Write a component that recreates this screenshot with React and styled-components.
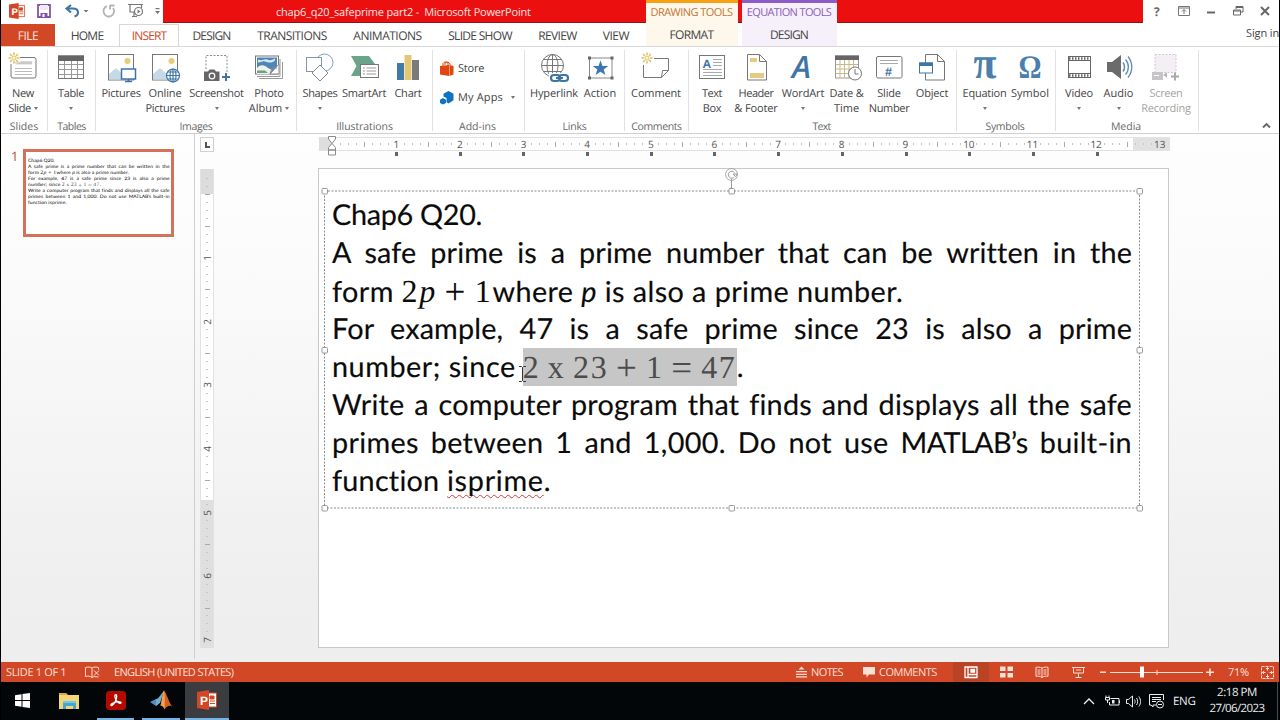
import React, { useLayoutEffect, useRef } from 'react';
import styled, { createGlobalStyle, css } from 'styled-components';

const ui = '"Open Sans", "Noto Sans", "Liberation Sans", sans-serif';
const accent = '#d24726';
const blue = '#3f75a5';
const grey = '#777';

const GlobalStyle = createGlobalStyle`
  * { box-sizing: border-box; }
  body {
    margin: 0;
    overflow: hidden;
    background: #000;
    font-family: ${ui};
    font-size: 11px;
    color: #444;
    text-rendering: geometricPrecision;
  }
  svg { display: block; flex: none; overflow: visible; }
`;

/* ---------- text with a fixed advance width ---------- */

const FitSpan = styled.span`
  display: inline-block;
  white-space: pre;
`;

function Fit({ w, children, className }) {
  const ref = useRef(null);
  useLayoutEffect(() => {
    const el = ref.current;
    el.style.letterSpacing = '0px';
    const count = el.textContent.length;
    const gap = (w - el.offsetWidth) / count;
    el.style.letterSpacing = `${gap.toFixed(3)}px`;
  }, [w, children]);
  return <FitSpan ref={ref} className={className}>{children}</FitSpan>;
}

/* ---------- window ---------- */

const Screen = styled.div`
  width: 1280px;
  height: 720px;
  padding: 0 1px;
  display: flex;
  flex-direction: column;
  overflow: hidden;
`;

const Header = styled.header`
  display: flex;
  height: 46px;
  background: #fff;
`;

const HeaderLeft = styled.div`
  width: 645px;
  display: flex;
  flex-direction: column;
`;

const HeaderRight = styled.div`
  flex: 1;
  display: flex;
  flex-direction: column;
`;

const TitleRow = styled.div`
  display: flex;
  height: 23px;
`;

const QuickAccess = styled.div`
  width: 162px;
  display: flex;
  align-items: center;
  padding: 0 0 2px 8px;
`;

const QuickIcon = styled.div`
  width: ${p => p.$w}px;
  display: flex;
`;

const RedBar = styled.div`
  flex: ${p => (p.$w ? 'none' : 1)};
  width: ${p => (p.$w ? `${p.$w}px` : 'auto')};
  height: 23px;
  background: #eb0f0f;
  border-bottom: 1px solid #8f1414;
  color: #fbe3e0;
  padding: 5px 0 0 ${p => (p.$title ? 113 : 0)}px;
  line-height: 16px;
`;

const WindowButtons = styled.div`
  width: 136px;
  display: flex;
  align-items: center;
  padding: 0 0 2px 9px;
  gap: 14px;
`;

const TabRow = styled.nav`
  display: flex;
  height: 23px;
  padding-top: 1px;
`;

const Tab = styled.div`
  width: ${p => p.$w}px;
  height: 22px;
  display: flex;
  align-items: center;
  justify-content: center;
  font-size: 12px;
  white-space: nowrap;
  color: #444;
  ${p => p.$kind === 'file' && css`
    background: ${accent};
    color: #fde4dc;
  `}
  ${p => p.$kind === 'active' && css`
    color: #cf4a2b;
    border: 1px solid #d8d8d8;
    border-width: 1px 1px 0;
    position: relative;
    height: 23px;
    padding-bottom: 2px;
    background: #fff;
  `}
`;

const ContextTab = styled.div`
  width: ${p => p.$w}px;
  height: 46px;
  background: ${p => p.$bg};
  border-top: 3px solid ${p => p.$color};
  display: flex;
  flex-direction: column;
  align-items: center;
  padding-right: 1px;
  span:first-child {
    color: ${p => p.$text};
    line-height: 19px;
    font-size: 11px;
  }
  span:last-child {
    line-height: 26px;
    font-size: 12px;
  }
`;

const SignIn = styled.div`
  height: 23px;
  display: flex;
  justify-content: flex-end;
  line-height: 21px;
`;

/* ---------- ribbon ---------- */

const RibbonBar = styled.div`
  display: flex;
  height: 88px;
  background: #fff;
  border-top: 1px solid #d8d8d8;
  border-bottom: 1px solid #d0d0d0;
  position: relative;
`;

const Group = styled.section`
  width: ${p => p.$w}px;
  height: 81px;
  margin-top: 3px;
  border-right: 1px solid #e2e2e2;
  display: flex;
  flex-direction: column;
`;

const GroupItems = styled.div`
  display: flex;
  height: 68px;
  flex: none;
`;

const GroupName = styled.div`
  display: flex;
  justify-content: center;
  margin-top: 1px;
  line-height: 16px;
  font-size: 10.5px;
  color: #666;
  padding-right: ${p => p.$shift || 0}px;
`;

const ItemBox = styled.div`
  flex: none;
  width: ${p => p.$w}px;
  display: flex;
  flex-direction: column;
  align-items: center;
  padding-top: 2px;
  color: ${p => (p.$disabled ? '#a3a3a3' : '#444')};
`;

const LabelLine = styled.div`
  display: flex;
  align-items: center;
  justify-content: center;
  gap: 3px;
  height: 15px;
  line-height: 15px;
  margin-top: ${p => (p.$first ? 4 : 0)}px;
  white-space: nowrap;
`;

const Caret = styled.i`
  width: 0;
  border: 2.5px solid transparent;
  border-top: 3px solid #777;
  border-bottom: 0;
`;

const AddinList = styled.div`
  display: flex;
  flex-direction: column;
  padding: 9px 0 0 7px;
`;

const AddinRow = styled.div`
  display: flex;
  align-items: center;
  gap: 4px;
  height: 19px;
  margin-bottom: 10px;
  i { margin-left: 4px; }
`;

const Collapse = styled.div`
  margin: auto 8px 4px auto;
`;

/* ---------- workspace ---------- */

const Workspace = styled.main`
  display: flex;
  height: 528px;
  background: linear-gradient(#fefefe 0, #fbfbfb 25%, #efefef 85%, #eee 100%);
`;

const ThumbPane = styled.aside`
  width: 194px;
  height: 525px;
  border-right: 1px solid #cfcfcf;
  display: flex;
  gap: 4px;
  padding: 15px 0 0 10px;
`;

const ThumbNumber = styled.div`
  width: 8px;
  font-size: 13px;
  line-height: 14px;
  color: #c0503a;
`;

const Thumb = styled.div`
  width: 151px;
  height: 88px;
  border: 3px solid #d4715a;
  background: #fff;
  overflow: hidden;
  padding: 4.5px 0 0 2px;
`;

const ThumbScale = styled.div`
  width: 800px;
  transform: scale(0.177, 0.16);
  transform-origin: 0 0;
`;

const Editor = styled.div`
  flex: 1;
  display: flex;
  padding-left: 5px;
`;

const RulerColumn = styled.div`
  width: 14px;
  padding-top: 3px;
`;

const TabSelector = styled.div`
  width: 14px;
  height: 15px;
  border: 1px solid #d0d0d0;
  background: #fff;
  padding: 4px;
  margin-bottom: 17px;
`;

const Canvas = styled.div`
  margin-left: 105px;
  width: 851px;
`;

const HRuler = styled.div`
  width: 851px;
  height: 14px;
  margin-top: 3px;
  display: flex;
  align-items: center;
  padding-left: 17.6px;
  border: 1px solid #e2e2e2;
  border-width: 1px 0;
  background: linear-gradient(90deg, #dedede 12px, #fff 12px, #fff 814px, #e1e1e1 814px);
  position: relative;
`;

const VRuler = styled.div`
  width: 14px;
  height: 479px;
  display: flex;
  flex-direction: column;
  align-items: center;
  padding-top: 5.6px;
  border: 1px solid #e2e2e2;
  border-width: 0 1px;
  overflow: hidden;
  background: linear-gradient(#dcdcdc 25px, #fff 25px, #fff 331px, #dfdfdf 331px);
`;

const RulerCell = styled.span`
  flex: none;
  ${p => (p.$vertical ? 'height' : 'width')}: 7.965px;
  display: flex;
  align-items: center;
  justify-content: center;
  font-size: 10px;
  line-height: 8px;
  color: #555;
  b {
    font-weight: 400;
    transform: ${p => (p.$vertical ? 'rotate(-90deg)' : 'none')};
  }
  i {
    flex: none;
    background: ${p => (p.$half ? '#aaa' : '#c4c4c4')};
    width: ${p => (p.$vertical && p.$half ? 5 : p.$vertical ? 2 : 1)}px;
    height: ${p => (p.$vertical ? 1 : p.$half ? 5 : 2)}px;
  }
`;

const TabStops = styled.div`
  display: flex;
  height: 17px;
  padding: 1px 0 0 76px;
  i {
    width: 3px;
    height: 4px;
    margin-right: 60.7px;
    flex: none;
    background: #666;
  }
`;

const IndentMarker = styled.svg`
  position: absolute;
  left: 8px;
  top: -2px;
`;

const Slide = styled.div`
  width: 851px;
  height: 480px;
  border: 1px solid #c8c8c8;
  background: #fff;
  padding: 22px 0 0 6px;
  margin-left: -1px;
`;

const TextFrame = styled.div`
  position: relative;
  width: 815px;
  height: 318px;
  padding: 4.5px 0 0 7px;
`;

const FrameOutline = styled.svg`
  position: absolute;
  left: -9px;
  top: -26.5px;
`;

const Body = styled.div`
  width: 800px;
  font-family: Lato, "Liberation Sans", sans-serif;
  font-size: 28.8px;
  line-height: 38.15px;
  font-variant-ligatures: none;
  -webkit-text-stroke: 0.15px currentColor;
  color: #0b0b0b;
`;

const Line = styled.div`
  height: 38.15px;
  white-space: nowrap;
  text-align: justify;
  text-align-last: ${p => (p.$full ? 'justify' : 'left')};
  letter-spacing: ${p => p.$ls || 0.15}px;
`;

const MathText = styled.span`
  font-family: "Liberation Serif", serif;
  font-size: 32px;
  line-height: 38px;
  word-spacing: -2px;
  -webkit-text-stroke: 0;
  b {
    font-weight: 400;
    font-size: 37px;
    line-height: 30px;
    position: relative;
    top: 2px;
  }
`;

const Selected = styled(MathText)`
  display: inline-block;
  height: 38px;
  width: 214px;
  margin-left: 7px;
  vertical-align: top;
  background: ${p => (p.$plain ? 'none' : '#c6c6c6')};
  color: #4c4c4c;
`;

const Misspelled = styled(Fit)`
  text-decoration: underline wavy #d23b3b 1px;
  text-underline-offset: 3px;
  text-decoration-skip-ink: none;
`;

const Cursor = styled.svg`
  position: absolute;
  left: 193px;
  top: 175px;
`;

/* ---------- status bar and taskbar ---------- */

const StatusBar = styled.footer`
  display: flex;
  align-items: center;
  height: 20px;
  padding-left: 5px;
  background: ${accent};
  color: #fbe0d6;
`;

const StatusSlot = styled.div`
  width: ${p => p.$w}px;
  height: 20px;
  display: flex;
  align-items: center;
  justify-content: ${p => (p.$center ? 'center' : 'flex-start')};
  gap: 4px;
  flex: none;
  background: ${p => (p.$on ? '#b94324' : 'transparent')};
`;

const Taskbar = styled.div`
  display: flex;
  height: 38px;
  background: #020609;
  color: #f0f0f0;
`;

const TaskButton = styled.div`
  width: ${p => p.$w}px;
  height: 38px;
  margin-right: ${p => p.$gap || 0}px;
  display: flex;
  align-items: center;
  justify-content: center;
  background: ${p => (p.$active ? '#3b3c40' : 'transparent')};
  border-bottom: 2px solid ${p => (p.$open ? '#76b3e2' : 'transparent')};
`;

const Tray = styled.div`
  margin-left: auto;
  display: flex;
  align-items: center;
  font-size: 11.5px;
`;

const TraySlot = styled.div`
  width: ${p => p.$w}px;
`;

const Clock = styled.div`
  width: 82px;
  display: flex;
  flex-direction: column;
  align-items: center;
  line-height: 16px;
  padding: 0 0 1px 2px;
`;

const Peek = styled.div`
  width: 1px;
  height: 38px;
  margin-right: 1px;
  background: #4a4a4a;
`;

/* ---------- icons ---------- */

const Ico = ({ children, size = 30 }) => (
  <svg width={size} height={size} viewBox={`0 0 ${size} ${size}`} fill="none" stroke={grey}>
    {children}
  </svg>
);

const Spark = () => (
  <g stroke="#e0c368" strokeWidth="1.6">
    <path d="M6 0.5V3M6 9v2.500M0.500 6H3M9 6h2.500M2.100 2.100l1.900 1.900M8 8l1.900 1.900M9.900 2.100L8 4M4 8L2.100 9.900" />
    <circle cx="6" cy="6" r="2" strokeWidth="1" fill="#fff6d8" />
  </g>
);

const Scene = () => (
  <>
    <rect x="2.500" y="2.500" width="25" height="25.500" fill="#fff" />
    <circle cx="21.500" cy="9" r="3" fill="#e8cd78" stroke="none" />
    <path d="M3 27.500V22l7-6 6 5.500 4-3 3 3v6z" fill="#c5dae6" stroke="none" />
  </>
);

const icons = {
  newSlide: (
    <>
      <path d="M12 5.500h14a2 2 0 0 1 2 2V24a2 2 0 0 1-2 2H5a2 2 0 0 1-2-2V12" />
      <path d="M13 9h11v3.500H8" fill="#d6d6d6" stroke="none" />
      <path d="M7 11h17M7 16.500h17M7 19.500h17M7 22.500h17" stroke="#bbb" />
      <Spark />
    </>
  ),
  table: (
    <>
      <rect x="2.500" y="4" width="25" height="22.500" fill="#fff" />
      <path d="M2 3.500h26V9H2z" fill="#666" stroke="none" />
      <path d="M3 12.500h24M3 17.500h24M3 22.500h24M8.500 9v17M15.500 9v17M21.500 9v17" stroke="#999" />
    </>
  ),
  pictures: (
    <>
      <Scene />
      <rect x="15.500" y="17" width="14" height="10" fill="#fff" stroke={blue} strokeWidth="1.500" />
      <path d="M22.500 27v3M19 29.500h7" stroke={blue} strokeWidth="1.500" />
    </>
  ),
  online: (
    <>
      <Scene />
      <g stroke={blue} strokeWidth="1.200">
        <circle cx="23" cy="23.500" r="6.500" fill="#fff" />
        <ellipse cx="23" cy="23.500" rx="3" ry="6.500" />
        <path d="M16.500 23.500h13M17.500 20h11M17.500 27h11M23 17v13" />
      </g>
    </>
  ),
  screenshot: (
    <>
      <path d="M4 17V3.500h21V20" strokeDasharray="2 1.500" stroke="#8a8a8a" />
      <path d="M2 19.500h4l1.500-2h5l1.500 2h3.500v9.500H2z" fill="#666" stroke="none" />
      <circle cx="10" cy="24" r="2.800" stroke="#fff" strokeWidth="1.200" />
      <path d="M24 21v8M20 25h8" stroke={blue} strokeWidth="2" />
    </>
  ),
  photo: (
    <>
      <path d="M5 26.500h23.500V10M3 24.500h23V7" stroke="#999" />
      <rect x="1.500" y="4" width="23" height="18" fill="#fff" />
      <path d="M3 5.500h20v12l-5 3.500H3z" fill="#4f86b5" stroke="none" />
      <path d="M4 7.500c4 2 6-1 9 0s4 1 8-1v2c-3 3-7 2-10 1s-4 1-7 1z" fill="#d6e8f3" stroke="none" />
      <path d="M3 16c4-4 7-3 11 0l4 2-2 4H3z" fill="#eef3ea" stroke="none" />
      <path d="M3 18.500h8l3 2.500H3z" fill="#6fa08a" stroke="none" />
      <path d="M16 22l9-10v10z" fill="#fff" stroke="#888" />
      <path d="M16 22l2-6h5" stroke="#888" />
    </>
  ),
  shapes: (
    <>
      <circle cx="19.500" cy="10.500" r="8.500" fill="#fff" stroke="#7d9fbd" />
      <rect x="1.500" y="5.500" width="15" height="14" fill="#fff" stroke="#8298ab" />
      <path d="M15 13l8 8-8 8-8-8z" fill="#fff" stroke="#808a94" />
    </>
  ),
  smartArt: (
    <>
      <path d="M2 4h18l6 8H12v12H2l5.500-10z" fill="#6aa58b" stroke="none" />
      <rect x="11.500" y="12.500" width="18" height="13" fill="#fff" />
      <path d="M14 16h2M14 19h2M14 22h2M17.500 16h9.500M17.500 19h9.500M17.500 22h9.500" stroke="#999" />
    </>
  ),
  chart: (
    <g stroke="none">
      <path d="M4 11h7v17H4z" fill="#4179a9" />
      <path d="M11.500 3h7v25h-7z" fill="#e2c875" />
      <path d="M19 8h7v20h-7z" fill="#7b7b7b" />
    </g>
  ),
  hyperlink: (
    <>
      <circle cx="13.500" cy="13.500" r="11" />
      <ellipse cx="13.500" cy="13.500" rx="5.500" ry="11" />
      <path d="M2.500 13.500h22M4.500 7.500h18M4.500 19.500h18M13.500 2.500v22" />
      <path d="M10 21h20v9H10z" fill="#fff" stroke="none" />
      <g stroke={blue} strokeWidth="2.200">
        <rect x="12" y="23" width="9" height="6" rx="3" />
        <rect x="20" y="23" width="9" height="6" rx="3" />
        <path d="M17 26h7" />
      </g>
    </>
  ),
  action: (
    <>
      <rect x="4.500" y="6" width="22.500" height="20" stroke="#888" />
      <path d="M3 4.500h3v3H3zM25.500 4.500h3v3h-3zM3 24.500h3v3H3zM25.500 24.500h3v3h-3z" fill="#666" stroke="none" />
      <path d="M15.500 8.500l2 5.500h5.700l-4.500 3.500 1.700 5.500-4.900-3.300-4.900 3.300 1.700-5.500L7.800 14h5.700z" fill="#3c79b0" stroke="none" />
    </>
  ),
  comment: (
    <>
      <path d="M13 6.500h14.500v12l-7 7H2.500V13" />
      <path d="M27.500 18.500h-6l-1 7" />
      <Spark />
    </>
  ),
  textBox: (
    <>
      <rect x="2.500" y="3.500" width="25" height="23" fill="#fff" />
      <path d="M16 7.500h9M16 10.500h9M16 13.500h9M6 17.500h19M6 20.500h19M6 23.500h19" stroke="#aaa" />
      <text x="5.500" y="16" fontFamily="Liberation Sans" fontWeight="700" fontSize="12" fill={blue} stroke="none">A</text>
    </>
  ),
  header: (
    <>
      <path d="M6.500 2.500h12l7 7V28h-19z" fill="#fff" />
      <path d="M18.500 2.500v7h7" />
      <path d="M9 6h7v4H9zM9 21h14v5H9z" fill="#e3cb80" stroke="none" />
    </>
  ),
  wordArt: (
    <text x="4" y="26" fontFamily="Open Sans" fontStyle="italic" fontWeight="600" fontSize="31" textLength="19" lengthAdjust="spacingAndGlyphs" fill={blue} stroke="none">A</text>
  ),
  date: (
    <>
      <rect x="3.500" y="4" width="23" height="22" fill="#fff" stroke="#999" />
      <path d="M3 3.500h24V8H3z" fill="#666" stroke="none" />
      <path d="M4 12.500h22M4 17h22M4 21.500h22M8 8v18M12.500 8v18M17 8v18M21.500 8v18" stroke="#c9b78a" />
      <circle cx="23" cy="21.500" r="6.500" fill="#fff" />
      <path d="M23 17v5h3.500" />
    </>
  ),
  slideNumber: (
    <>
      <rect x="2.500" y="4.500" width="25.500" height="21.500" rx="1.500" fill="#fff" />
      <path d="M6 8.500h18M6 11.500h18" stroke="#aaa" />
      <text x="11" y="23.500" fontFamily="Liberation Sans" fontWeight="700" fontSize="12.500" fill={blue} stroke="none">#</text>
    </>
  ),
  object: (
    <>
      <path d="M8.500 2.500h12l7 7V28h-19z" fill="#fff" />
      <path d="M20.500 2.500v7h7" />
      <rect x="2.500" y="11" width="13" height="10" fill="#fff" stroke={blue} />
      <path d="M2 10.500h14v3.500H2z" fill={blue} stroke="none" />
    </>
  ),
  equation: (
    <text x="3.500" y="26" fontFamily="Liberation Serif" fontWeight="700" fontSize="45" textLength="23" lengthAdjust="spacingAndGlyphs" fill="#4a7fae" stroke="none">π</text>
  ),
  symbol: (
    <text x="3.500" y="26" fontFamily="Liberation Serif" fontWeight="700" fontSize="33" textLength="23" lengthAdjust="spacingAndGlyphs" fill="#4a7fae" stroke="none">Ω</text>
  ),
  video: (
    <>
      <rect x="4.500" y="4.500" width="22" height="21" fill="#fff" stroke="#666" />
      <path d="M5 8.500h21M5 21.500h21" stroke="#666" />
      <path d="M5 6.500h21M5 23.500h21" stroke="#666" strokeWidth="2.500" strokeDasharray="1.500 1.500" />
    </>
  ),
  audio: (
    <>
      <path d="M3 10h5l9-7v24l-9-7H3z" fill="#6b6b6b" stroke="none" />
      <path d="M19 10.500c2 2.500 2 6.500 0 9" stroke="#5e8bb0" strokeWidth="1.500" />
      <path d="M21.500 7.500c3.800 4 3.800 11 0 15M24 4.500c5 6 5 15 0 21" stroke="#5e8bb0" strokeWidth="1.300" />
    </>
  ),
  recording: (
    <>
      <rect x="4" y="2.500" width="21" height="18" fill="#f4eff4" stroke="#cfc8cf" strokeDasharray="2 1.500" />
      <path d="M1 20h11v8H1z" fill="#c8c5c8" stroke="none" />
      <path d="M12 23l4-2.500v5z" fill="#b5b2b5" stroke="none" />
      <path d="M3 23.500h5" stroke="#fff" />
      <path d="M24 20.500v8M20 24.500h8" stroke="#aaa" strokeWidth="2" />
    </>
  ),
};

const PowerPointLogo = ({ size }) => (
  <svg width={size} height={size} viewBox="0 0 20 20">
    <path d="M11 3h8.500v14H11z" fill="#fff" stroke="#d24726" />
    <path d="M13 6h4v3h-4zM13 11h5M13 13.500h5" fill="#d24726" stroke="#d24726" />
    <path d="M0 2l12-2v20L0 18z" fill="#d24726" />
    <text x="3" y="14.500" fontFamily="Liberation Sans" fontWeight="700" fontSize="12" fill="#fff">P</text>
  </svg>
);

/* ---------- data ---------- */

const tabs = [
  { name: 'FILE', w: 54, fit: 20, kind: 'file' },
  { name: 'HOME', w: 64, fit: 33 },
  { name: 'INSERT', w: 60, fit: 35, kind: 'active' },
  { name: 'DESIGN', w: 65, fit: 38 },
  { name: 'TRANSITIONS', w: 96, fit: 69 },
  { name: 'ANIMATIONS', w: 95, fit: 68 },
  { name: 'SLIDE SHOW', w: 90, fit: 64 },
  { name: 'REVIEW', w: 65, fit: 38 },
  { name: 'VIEW', w: 52, fit: 26 },
];

const leftGroups = [
  {
    name: 'Slides', fit: 28, w: 47, items: [
      { icon: 'newSlide', w: 44, lines: [['New', 22], ['Slide', 23]], caret: 'inline' },
    ],
  },
  {
    name: 'Tables', fit: 29, w: 48, items: [
      { icon: 'table', w: 46, lines: [['Table', 26]], caret: 'below' },
    ],
  },
  {
    name: 'Images', fit: 33, w: 201, items: [
      { icon: 'pictures', w: 50, lines: [['Pictures', 39]] },
      { icon: 'online', w: 38, lines: [['Online', 33], ['Pictures', 39]] },
      { icon: 'screenshot', w: 65, lines: [['Screenshot', 54]], caret: 'below' },
      { icon: 'photo', w: 40, lines: [['Photo', 30], ['Album', 33]], caret: 'inline' },
    ],
  },
  {
    name: 'Illustrations', fit: 57, w: 136, items: [
      { icon: 'shapes', w: 46, lines: [['Shapes', 35]], caret: 'below' },
      { icon: 'smartArt', w: 42, lines: [['SmartArt', 44]] },
      { icon: 'chart', w: 46, lines: [['Chart', 27]] },
    ],
  },
];

const rightGroups = [
  {
    name: 'Links', fit: 24, w: 100, items: [
      { icon: 'hyperlink', w: 58, lines: [['Hyperlink', 48]] },
      { icon: 'action', w: 34, lines: [['Action', 32]] },
    ],
  },
  {
    name: 'Comments', fit: 50, w: 64, items: [
      { icon: 'comment', w: 62, lines: [['Comment', 50]] },
    ],
  },
  {
    name: 'Text', fit: 18, w: 268, shift: 2, items: [
      { icon: 'textBox', w: 46, lines: [['Text', 20], ['Box', 18]] },
      { icon: 'header', w: 42, lines: [['Header', 35], ['& Footer', 43]] },
      { icon: 'wordArt', w: 52, lines: [['WordArt', 42]], caret: 'below' },
      { icon: 'date', w: 35, lines: [['Date &', 34], ['Time', 25]] },
      { icon: 'slideNumber', w: 50, lines: [['Slide', 24], ['Number', 41]] },
      { icon: 'object', w: 36, lines: [['Object', 32]] },
    ],
  },
  {
    name: 'Symbols', fit: 39, w: 99, shift: 2, items: [
      { icon: 'equation', w: 55, lines: [['Equation', 44]], caret: 'below' },
      { icon: 'symbol', w: 36, lines: [['Symbol', 38]] },
    ],
  },
  {
    name: 'Media', fit: 30, w: 143, shift: 2, items: [
      { icon: 'video', w: 46, lines: [['Video', 28]], caret: 'below' },
      { icon: 'audio', w: 33, lines: [['Audio', 30]], caret: 'below' },
      { icon: 'recording', w: 62, lines: [['Screen', 33], ['Recording', 50]], disabled: true },
    ],
  },
];

const range = (from, to) => Array.from({ length: to - from + 1 }, (_, i) => from + i);

/* ---------- parts ---------- */

function RibbonItem({ icon, w, lines, caret, disabled }) {
  return (
    <ItemBox $w={w} $disabled={disabled}>
      <Ico>{icons[icon]}</Ico>
      {lines.map(([text, fit], i) => (
        <LabelLine key={i} $first={i === 0}>
          <Fit w={fit}>{text}</Fit>
          {caret === 'inline' && i === 1 && <Caret />}
        </LabelLine>
      ))}
      {caret === 'below' && <LabelLine><Caret /></LabelLine>}
    </ItemBox>
  );
}

function RibbonGroup({ name, fit, w, shift, items, children }) {
  return (
    <Group $w={w}>
      <GroupItems>
        {items ? items.map(item => <RibbonItem key={item.icon} {...item} />) : children}
      </GroupItems>
      <GroupName $shift={shift}><Fit w={fit}>{name}</Fit></GroupName>
    </Group>
  );
}

function RulerMarks({ from, to, vertical }) {
  return range(from, to).map(i => (
    <RulerCell key={i} $vertical={vertical} $half={i % 4 === 0}>
      {i % 8 === 0 && i !== 0 ? <b>{i / 8}</b> : <i />}
    </RulerCell>
  ));
}

function SlideBody({ plain }) {
  return (
    <Body>
      <Line><Fit w={150}>Chap6 Q20.</Fit></Line>
      <Line $full>A safe prime is a prime number that can be written in the</Line>
      <Line>
        <Fit w={70}>form </Fit>
        <MathText><Fit w={91}>2<em>p</em> <b>+</b> 1</Fit></MathText>
        <Fit w={411}>where <em>p</em> is also a prime number.</Fit>
      </Line>
      <Line $full>For example, 47 is a safe prime since 23 is also a prime</Line>
      <Line>
        <Fit w={184}>number; since</Fit>
        <Selected $plain={plain}><Fit w={214}>2 x 23 <b>+</b> 1 <b>=</b> 47</Fit></Selected>
        .
      </Line>
      <Line $full $ls={0.2}>Write a computer program that finds and displays all the safe</Line>
      <Line $full $ls={0.3}>
        primes between 1 and 1,000. Do not use <Fit w={127}>MATLAB’s</Fit> built-in
      </Line>
      <Line>
        <Fit w={115}>function </Fit>
        {plain ? <Fit w={97}>isprime</Fit> : <Misspelled w={97}>isprime</Misspelled>}
        .
      </Line>
    </Body>
  );
}

function Frame() {
  const handles = [[8, 26], [415, 26], [823, 26], [8, 185], [823, 185], [8, 343], [415, 343], [823, 343]];
  return (
    <FrameOutline width="832" height="352" fill="none" stroke="#8c8c8c">
      <rect x="8.500" y="26" width="815" height="317" strokeDasharray="2 1.500" />
      <path d="M415.500 14v10" stroke="#999" />
      <circle cx="415.500" cy="9.500" r="6" stroke="#aaa" />
      <path d="M418.500 7.500a3.500 3.500 0 1 0 0 4.500M417 9h4.500l-2 2.500z" stroke="#999" />
      {handles.map(([x, y]) => (
        <rect key={`${x}-${y}`} x={x - 2} y={y - 2.5} width="5.500" height="5.500" rx="1" fill="#fff" stroke="#999" />
      ))}
    </FrameOutline>
  );
}

export default function App() {
  return (
    <>
      <GlobalStyle />
      <Screen>
        <Header>
          <HeaderLeft>
            <TitleRow>
              <QuickAccess>
                <QuickIcon $w={28}><PowerPointLogo size={16} /></QuickIcon>
                <QuickIcon $w={28}>
                  <svg width="14" height="14" viewBox="0 0 14 14">
                    <path d="M1 1h12v12H1z" fill="#fff" stroke="#8357a8" strokeWidth="1.800" />
                    <path d="M3 1h8v5H3z" fill="#efe8f5" stroke="none" />
                    <path d="M3.500 9h7v4h-7z" fill="#8357a8" />
                    <path d="M5.500 10h2v3h-2z" fill="#fff" />
                  </svg>
                </QuickIcon>
                <QuickIcon $w={37}>
                  <svg width="24" height="14" viewBox="0 0 24 14" fill="none" stroke="#3f75a5" strokeWidth="2">
                    <path d="M6 1L1.500 4.500 6 8.500M2 4.500h6c3 0 5 1.500 5 4 0 2.500-1.500 3.500-3.500 4" />
                    <path d="M18.500 6h5l-2.500 2.500z" fill="#777" stroke="none" />
                  </svg>
                </QuickIcon>
                <QuickIcon $w={26}>
                  <svg width="14" height="14" viewBox="0 0 14 14" fill="none" stroke="#b4b4b4" strokeWidth="1.800">
                    <path d="M5 2.200A5.300 5.300 0 1 0 11 4M8 1v4.500M8 1.500h4.500" />
                  </svg>
                </QuickIcon>
                <QuickIcon $w={27}>
                  <svg width="16" height="15" viewBox="0 0 16 15" fill="none" stroke="#777" strokeWidth="1.200">
                    <path d="M0 1.500h15M2 1.500v7.500h4M4 13.500h5M6 9.500v4M13.500 1.500V5" />
                    <circle cx="10.500" cy="8.500" r="4" />
                    <path d="M9.500 6.500v4l3-2z" fill="#777" stroke="none" />
                  </svg>
                </QuickIcon>
                <svg width="6" height="8" viewBox="0 0 6 8" fill="#777">
                  <path d="M0.500 1h4v1.200h-4zM0 4h5L2.500 7z" />
                </svg>
              </QuickAccess>
              <RedBar $title><Fit w={255}>chap6_q20_safeprime part2 -  Microsoft PowerPoint</Fit></RedBar>
            </TitleRow>
            <TabRow>
              {tabs.map(tab => (
                <Tab key={tab.name} $w={tab.w} $kind={tab.kind}>
                  <Fit w={tab.fit}>{tab.name}</Fit>
                </Tab>
              ))}
            </TabRow>
          </HeaderLeft>
          <ContextTab $w={92} $bg="#fef8ec" $color="#f8a013" $text="#c4752f">
            <Fit w={82}>DRAWING TOOLS</Fit>
            <Fit w={44}>FORMAT</Fit>
          </ContextTab>
          <RedBar $w={4} />
          <ContextTab $w={95} $bg="#f5f0fa" $color="#8b5cc6" $text="#8a5cc0">
            <Fit w={84}>EQUATION TOOLS</Fit>
            <Fit w={38}>DESIGN</Fit>
          </ContextTab>
          <HeaderRight>
            <TitleRow>
              <RedBar />
              <WindowButtons>
                <svg width="11" height="14" viewBox="0 0 11 14">
                  <text x="2" y="11.500" fontFamily="Open Sans" fontWeight="700" fontSize="12" fill="#666">?</text>
                </svg>
                <svg width="14" height="12" viewBox="0 0 14 12" fill="none" stroke="#777">
                  <path d="M1.500 1.500h11v9h-11zM1.500 3h11M7 9V4.500M5 6.500l2-2 2 2" />
                </svg>
                <svg width="13" height="12" viewBox="0 0 13 12"><path d="M2 6.500h8v2H2z" fill="#666" /></svg>
                <svg width="13" height="12" viewBox="0 0 13 12" fill="none" stroke="#666">
                  <path d="M1.500 5h7v5h-7zM1.500 6h7M4 4V1.500h7V7H9M4 2.500h7" />
                </svg>
                <svg width="13" height="12" viewBox="0 0 13 12"><path d="M2 2l8 8M10 2l-8 8" stroke="#666" strokeWidth="2" /></svg>
              </WindowButtons>
            </TitleRow>
            <SignIn><Fit w={33}>Sign in</Fit></SignIn>
          </HeaderRight>
        </Header>

        <RibbonBar>
          {leftGroups.map(group => <RibbonGroup key={group.name} {...group} />)}
          <RibbonGroup name="Add-ins" fit={37} w={92} shift={2}>
            <AddinList>
              <AddinRow>
                <svg width="14" height="15" viewBox="0 0 14 15">
                  <path d="M0 5l9-1v11l-9-1.500zM9.500 4l4 1v8.500l-4 1.500z" fill="#e2460f" />
                  <path d="M3 5V2.500C4 .5 7 .5 8 2v3M5 4V2c2-1.500 4-1 5 1v1.500" fill="none" stroke="#e2460f" />
                </svg>
                <Fit w={26}>Store</Fit>
              </AddinRow>
              <AddinRow>
                <svg width="14" height="14" viewBox="0 0 14 14" fill="#0f72c0">
                  <path d="M8.500 0l5 2.800v6.400l-5 3.300-2-1.200V7L3.500 5.500V2.800z" />
                  <path d="M3 7l3 1.700v3.200L3 13.500 0 11.900V8.700z" />
                </svg>
                <Fit w={45}>My Apps</Fit>
                <Caret />
              </AddinRow>
            </AddinList>
          </RibbonGroup>
          {rightGroups.map(group => <RibbonGroup key={group.name} {...group} />)}
          <Collapse>
            <svg width="9" height="7" viewBox="0 0 9 7"><path d="M1 5.500l3.500-3.500L8 5.500" fill="none" stroke="#666" strokeWidth="1.800" /></svg>
          </Collapse>
        </RibbonBar>

        <Workspace>
          <ThumbPane>
            <ThumbNumber>1</ThumbNumber>
            <Thumb><ThumbScale><SlideBody plain /></ThumbScale></Thumb>
          </ThumbPane>
          <Editor>
            <RulerColumn>
              <TabSelector>
                <svg width="5" height="6" viewBox="0 0 5 6"><path d="M1 0v5h4" fill="none" stroke="#555" strokeWidth="2" /></svg>
              </TabSelector>
              <VRuler><RulerMarks from={-2} to={56} vertical /></VRuler>
            </RulerColumn>
            <Canvas>
              <HRuler>
                <RulerMarks from={1} to={104} />
                <IndentMarker width="11" height="20" fill="#fff" stroke="#8a8a8a">
                  <path d="M1.500 0.500h7v2.500L5 7.500 1.500 3zM5 7.500l3.500 4v2.500h-7v-2.500zM1.500 14h7v5h-7z" />
                </IndentMarker>
              </HRuler>
              <TabStops>{range(1, 12).map(i => <i key={i} />)}</TabStops>
              <Slide>
                <TextFrame>
                  <SlideBody />
                  <Frame />
                  <Cursor width="9" height="17" fill="none" stroke="#333">
                    <path d="M1 0.500h2.500l1 1 1-1H8M4.500 1.500v13M1 15.500h2.500l1-1 1 1H8" />
                  </Cursor>
                </TextFrame>
              </Slide>
            </Canvas>
          </Editor>
        </Workspace>

        <StatusBar>
          <StatusSlot $w={79}><Fit w={60}>SLIDE 1 OF 1</Fit></StatusSlot>
          <StatusSlot $w={29}>
            <svg width="15" height="13" viewBox="0 0 15 13" fill="none" stroke="#fbe0d6">
              <path d="M7 11.500V2C5 .8 3 .8 0.500 1.500v9c2.500-.7 4.500-.5 6.500 1zM7 2c2-1.200 4-1.200 6.500-.5v2M7 11.500c1-1 3-1 6.500-.5M9 4.500l5 5M14 4.500l-5 5" />
            </svg>
          </StatusSlot>
          <StatusSlot $w={682}><Fit w={119}>ENGLISH (UNITED STATES)</Fit></StatusSlot>
          <StatusSlot $w={67}>
            <svg width="11" height="12" viewBox="0 0 11 12" fill="#fbe0d6">
              <path d="M5.500 0.500L8.500 3.500h-6zM0 5h11v1.200H0zM0 7.700h11v1.200H0zM0 10.300h11v1.200H0z" />
            </svg>
            <Fit w={32}>NOTES</Fit>
          </StatusSlot>
          <StatusSlot $w={90}>
            <svg width="12" height="12" viewBox="0 0 12 12" fill="#fbe0d6"><path d="M0 1h12v7.500H6L3.500 11.500V8.500H0z" /></svg>
            <Fit w={58}>COMMENTS</Fit>
          </StatusSlot>
          <StatusSlot $w={36} $center $on>
            <svg width="14" height="12" viewBox="0 0 14 12" fill="none" stroke="#fff" strokeWidth="1.300">
              <path d="M1 1h12v10.500H1zM4 1v10.500M4 8.500h9" /><path d="M7 3.500h3.500v2.500H7z" fill="#fff" />
            </svg>
          </StatusSlot>
          <StatusSlot $w={35} $center>
            <svg width="13" height="12" viewBox="0 0 13 12" fill="#fbe0d6"><path d="M0 0.500h5.500v4.500H0zM7.500 0.500H13v4.500H7.500zM0 7h5.500v4.500H0zM7.500 7H13v4.500H7.500z" /></svg>
          </StatusSlot>
          <StatusSlot $w={35} $center>
            <svg width="14" height="12" viewBox="0 0 14 12" fill="none" stroke="#fbe0d6">
              <path d="M7 11.500V2C5 1 3 1 1 1.300v9c2-.3 4-.3 6 1.200 2-1.500 4-1.500 6-1.200v-9C11 1 9 1 7 2M2.500 4h3M2.500 6h3M2.500 8h3M8.500 4h3M8.500 6h3M8.500 8h3" />
            </svg>
          </StatusSlot>
          <StatusSlot $w={39} $center>
            <svg width="13" height="12" viewBox="0 0 13 12" fill="none" stroke="#fbe0d6">
              <path d="M0 1.500h13M1.500 1.500v5.500h10V1.500M4 4h5M6.500 7v4M3.500 11.500h6" />
            </svg>
          </StatusSlot>
          <StatusSlot $w={130}>
            <svg width="122" height="14" viewBox="0 0 122 14" fill="#fbe0d6">
              <path d="M2 6.500h6V8H2zM12 7h93v1H12zM58.500 5h1v5h-1zM108 6.500h8V8h-8zM111.200 3.500h1.600v7.500h-1.600z" />
              <path d="M42 1.500h4v11h-4z" fill="#fff" />
            </svg>
          </StatusSlot>
          <StatusSlot $w={33}><Fit w={21}>71%</Fit></StatusSlot>
          <StatusSlot $w={14}>
            <svg width="13" height="13" viewBox="0 0 13 13" fill="none" stroke="#fbe0d6">
              <rect x="0.500" y="0.500" width="12" height="12" strokeDasharray="3 1" />
              <path d="M6.500 1.500v3M6.500 8.500v3M1.500 6.500h3M8.500 6.500h3M5 3l1.500-1.500L8 3M5 10l1.500 1.500L8 10M3 5L1.500 6.500 3 8M10 5l1.500 1.500L10 8" />
            </svg>
          </StatusSlot>
        </StatusBar>

        <Taskbar>
          <TaskButton $w={42}>
            <svg width="15" height="15" viewBox="0 0 15 15" fill="#fff"><path d="M0 2.200L6.500 1.200V7H0zM7.500 1L15 0v7H7.500zM0 8h6.500v5.800L0 12.800zM7.500 8H15v7l-7.500-1z" /></svg>
          </TaskButton>
          <TaskButton $w={51} $gap={3}>
            <svg width="20" height="17" viewBox="0 0 20 17">
              <path d="M0 1h7l2 2h11v14H0z" fill="#f6d775" />
              <path d="M0 1h7l1 2H0z" fill="#dba93c" />
              <path d="M4 9h13v8h-3v-3H7v3H4z" fill="#45a7d4" />
              <path d="M4 9h13v2H4z" fill="#74c8e8" />
            </svg>
          </TaskButton>
          <TaskButton $w={37} $gap={8} $open>
            <svg width="20" height="19" viewBox="0 0 20 19">
              <rect width="20" height="19" rx="3.500" fill="#b30b00" />
              <path d="M9 4c1.500-1 2 .5 1.500 3-.8 3-3 6.500-4.500 7.500-1 .5-1.500-.5-.5-1.500C7 11.500 12 10 14.500 11c1.500 1-.5 1.800-2 .8C10.500 10.500 8.300 6.500 9 4z" fill="none" stroke="#fff" strokeWidth="1.300" />
            </svg>
          </TaskButton>
          <TaskButton $w={38} $gap={5} $open>
            <svg width="23" height="20" viewBox="0 0 23 20">
              <path d="M0 12l6-3 4 3-4 4z" fill="#4f8fc4" />
              <path d="M6 9c3 0 6-7 8-8l-4 12-4 3z" fill="#77a9c8" />
              <path d="M14 0.500C17 4 19 13 22.500 17c-3-2-5-1.500-8 2.500-1-3-2-4-4-4C12 11 12.500 2 14 0.500z" fill="#d2601f" />
              <path d="M14 0.500c1 4 1 12 .5 19-1-3-2-4-4-4C12 11 12.500 2 14 0.500z" fill="#f0a25c" />
            </svg>
          </TaskButton>
          <TaskButton $w={44} $open $active><PowerPointLogo size={20} /></TaskButton>
          <Tray>
            <TraySlot $w={22}>
              <svg width="12" height="8" viewBox="0 0 12 8" fill="none" stroke="#eee" strokeWidth="1.300"><path d="M1 7l5-5 5 5" /></svg>
            </TraySlot>
            <TraySlot $w={21}>
              <svg width="16" height="12" viewBox="0 0 16 12" fill="none" stroke="#eee">
                <path d="M5.500 3.500h8.500v6.500H4.500V7M14.500 5.500v2.500M1 0.500v2M4 0.500v2M0.500 2.500h4v2.500h-4zM2.500 5v3" />
                <path d="M7 5h2.500v3.500H7z" fill="#eee" stroke="none" />
              </svg>
            </TraySlot>
            <TraySlot $w={23}>
              <svg width="16" height="13" viewBox="0 0 16 13" fill="none" stroke="#eee"><path d="M0.500 4.500h2L6.500 1v11L2.500 8.500h-2zM8.500 4.500c.8 1 .8 3 0 4M10.500 3c1.500 2 1.500 5 0 7M12.800 1.500c2.300 3 2.300 7 0 10" /></svg>
            </TraySlot>
            <TraySlot $w={24}>
              <svg width="16" height="16" viewBox="0 0 16 16" fill="none" stroke="#eee">
                <path d="M7 12H4v2l-2-2H0.500V1.500h14V7M3 4.500h9M3 6.500h9M3 8.500h4" />
                <circle cx="11" cy="11.500" r="3.500" /><path d="M9 11.500h4" />
              </svg>
            </TraySlot>
            <TraySlot $w={22}><Fit w={22}>ENG</Fit></TraySlot>
            <Clock>
              <Fit w={40}>2:18 PM</Fit>
              <Fit w={55}>27/06/2023</Fit>
            </Clock>
            <Peek />
          </Tray>
        </Taskbar>
      </Screen>
    </>
  );
}
